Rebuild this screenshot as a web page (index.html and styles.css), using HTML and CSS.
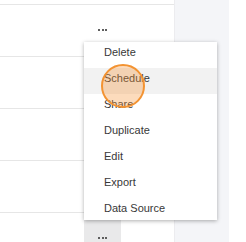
FILE: index.html
```html
<!DOCTYPE html>
<html>
<head>
<meta charset="utf-8">
<link rel="stylesheet" href="styles.css">
</head>
<body>
<div class="page">
  <div class="table">
    <div class="row"></div>
    <div class="row"><div class="more"><span></span><span></span><span></span></div></div>
    <div class="row"></div>
    <div class="row"></div>
    <div class="row"></div>
    <div class="row">
      <div class="more active"><span></span><span></span><span></span>
        <ul class="menu">
          <li>Delete</li>
          <li class="hover">Schedule</li>
          <li>Share</li>
          <li>Duplicate</li>
          <li>Edit</li>
          <li>Export</li>
          <li>Data Source</li>
        </ul>
      </div>
    </div>
  </div>
  <div class="side"></div>
  <div class="rest"></div>
</div>
<div class="touch"></div>
</body>
</html>
```
FILE: styles.css
```css
html, body {
  margin: 0;
  padding: 0;
  width: 246px;
  height: 242px;
  overflow: hidden;
  background: #fff;
  font-family: "Liberation Sans", Arial, sans-serif;
}
.page {
  display: flex;
  height: 242px;
  overflow: hidden;
}
.table {
  width: 174px;
  border-right: 1px solid #ececef;
  margin-top: -47px;
}
.row {
  height: 51px;
  border-bottom: 1px solid #e6e6e6;
  display: flex;
  align-items: center;
  padding-left: 84px;
}
.more {
  position: relative;
  width: 37px;
  height: 36px;
  margin-top: -1px;
  display: flex;
  align-items: center;
  justify-content: center;
  gap: 1.5px;
}
.more > span {
  width: 2px;
  height: 2px;
  background: #5e5e5e;
}
.more.active {
  background: #e9e9ea;
  align-self: flex-start;
  margin-top: 7px;
}
.side {
  width: 54px;
  background: #f4f5f8;
}
.rest {
  flex: 1;
  background: #fff;
}
.menu {
  position: absolute;
  left: 0;
  bottom: 100%;
  width: 133px;
  margin: 0;
  padding: 0;
  list-style: none;
  background: #fff;
  box-shadow: 0 1px 4px rgba(0, 0, 0, 0.32);
  z-index: 2;
}
.menu li {
  font-size: 11px;
  line-height: 12px;
  padding: 4px 20px 10px;
  color: #383838;
  white-space: nowrap;
}
.menu li:last-child {
  padding-bottom: 6px;
}
.menu li.hover {
  background: #f2f2f2;
}
.touch {
  position: absolute;
  left: 101px;
  top: 64px;
  width: 40px;
  height: 40px;
  border: 2px solid #f39332;
  border-radius: 50%;
  background: rgba(246, 146, 52, 0.33);
  z-index: 3;
}
```
